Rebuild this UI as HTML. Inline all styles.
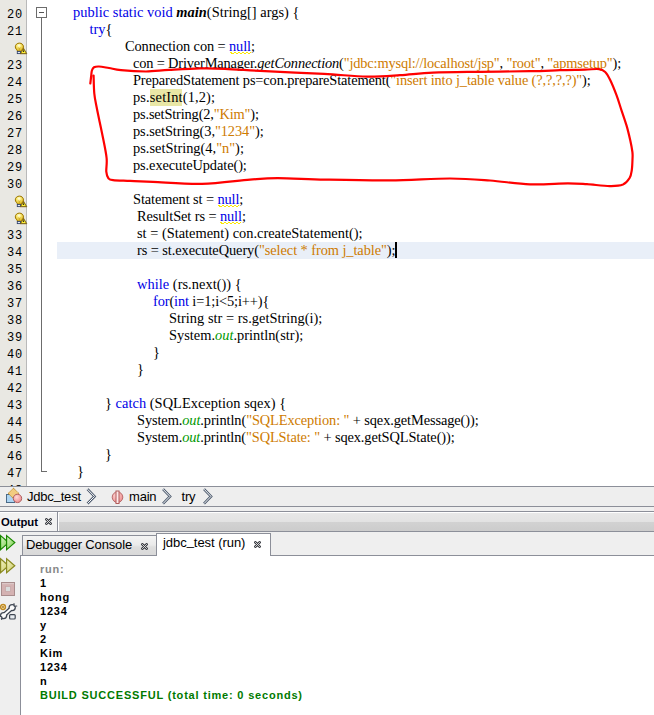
<!DOCTYPE html>
<html><head><meta charset="utf-8">
<style>
*{margin:0;padding:0;box-sizing:border-box}
html,body{width:654px;height:715px;overflow:hidden;background:#fff;position:relative}
#gutter{position:absolute;left:0;top:0;width:26px;height:486px;background:#e9e8e3}
#gline{position:absolute;left:26px;top:0;width:1px;height:486px;background:#b9b9b9}
.ln{position:absolute;left:0;width:23px;padding-top:2.5px;text-align:right;font-family:"Liberation Mono",monospace;font-size:12px;letter-spacing:0.8px;line-height:17px;height:17px;color:#000}
.cl{position:absolute;white-space:pre;font-family:"Liberation Serif",serif;font-size:14.4px;line-height:17px;height:17px;color:#000}
.k{color:#0000e6}
.s{color:#ce7b00}
.o{color:#009900;font-style:italic}
.wv{position:absolute;height:1px;background:repeating-linear-gradient(90deg,#fce800 0 2px,transparent 2px 4px)}
.hl{}
#cur{position:absolute;left:57px;top:242px;width:597px;height:17px;background:#e9eff8}
.fold{position:absolute;background:#6c6c6c}
.bulb{position:absolute;left:14px;width:14px;height:14px}
.wavy{position:absolute;height:3px}
.bc{position:absolute;top:488px;font-family:"Liberation Sans",sans-serif;font-size:13px;letter-spacing:-0.2px;line-height:18px;color:#000;white-space:pre}
#outT{position:absolute;left:1px;top:515px;font-family:"Liberation Sans",sans-serif;font-weight:bold;font-size:11.3px;line-height:14px;color:#000011}
.tabt{position:absolute;font-family:"Liberation Sans",sans-serif;font-size:13px;letter-spacing:-0.15px;line-height:16px;color:#000;white-space:pre}
.con{position:absolute;left:40px;font-family:"Liberation Sans",sans-serif;font-weight:bold;font-size:11px;line-height:14px;letter-spacing:0.8px;color:#000;white-space:pre}
</style></head><body>
<div id="gutter"></div>
<div id="gline"></div>
<div id="cur"></div>

<div style="position:absolute;left:150px;top:89px;width:32px;height:17px;background:#e9e7a6"></div>
<div class="wv" style="left:230px;top:52px;width:21px"></div>
<div class="wv" style="left:230px;top:53px;width:21px;background-position:2px 0"></div>
<div class="wv" style="left:218px;top:205px;width:21px"></div>
<div class="wv" style="left:218px;top:206px;width:21px;background-position:2px 0"></div>
<div class="wv" style="left:220px;top:222px;width:21px"></div>
<div class="wv" style="left:220px;top:223px;width:21px;background-position:2px 0"></div>
<!-- line numbers -->
<div class="ln" style="top:4px">20</div>
<div class="ln" style="top:21px">21</div>
<div class="ln" style="top:55px">23</div>
<div class="ln" style="top:72px">24</div>
<div class="ln" style="top:89px">25</div>
<div class="ln" style="top:106px">26</div>
<div class="ln" style="top:123px">27</div>
<div class="ln" style="top:140px">28</div>
<div class="ln" style="top:157px">29</div>
<div class="ln" style="top:174px">30</div>
<div class="ln" style="top:225px">33</div>
<div class="ln" style="top:242px">34</div>
<div class="ln" style="top:259px">35</div>
<div class="ln" style="top:276px">36</div>
<div class="ln" style="top:293px">37</div>
<div class="ln" style="top:310px">38</div>
<div class="ln" style="top:327px">39</div>
<div class="ln" style="top:344px">40</div>
<div class="ln" style="top:361px">41</div>
<div class="ln" style="top:378px">42</div>
<div class="ln" style="top:395px">43</div>
<div class="ln" style="top:412px">44</div>
<div class="ln" style="top:429px">45</div>
<div class="ln" style="top:446px">46</div>
<div class="ln" style="top:463px">47</div>
<div class="ln" style="top:480px">48</div>

<!-- code -->
<div class="cl" style="left:73px;top:4px;letter-spacing:0.03px"><span class="k">public static void</span> <b><i>main</i></b>(String[] args) {</div>
<div class="cl" style="left:89.5px;top:21px"><span class="k">try</span>{</div>
<div class="cl" style="left:125px;top:38px;letter-spacing:-0.12px">Connection con = <span class="k nul">null</span>;</div>
<div class="cl" style="left:133px;top:55px;letter-spacing:-0.165px">con = DriverManager.<i>getConnection</i>(<span class="s">"jdbc:mysql://localhost/jsp"</span>, <span class="s">"root"</span>, <span class="s">"apmsetup"</span>);</div>
<div class="cl" style="left:133px;top:72px;letter-spacing:-0.136px">PreparedStatement ps=con.prepareStatement(<span class="s">"insert into j_table value (?,?,?,?)"</span>);</div>
<div class="cl" style="left:133px;top:89px;letter-spacing:0.15px">ps.<span class="hl">setInt</span>(1,2);</div>
<div class="cl" style="left:133px;top:106px;letter-spacing:-0.16px">ps.setString(2,<span class="s">"Kim"</span>);</div>
<div class="cl" style="left:133px;top:123px;letter-spacing:-0.08px">ps.setString(3,<span class="s">"1234"</span>);</div>
<div class="cl" style="left:133px;top:140px">ps.setString(4,<span class="s">"n"</span>);</div>
<div class="cl" style="left:133px;top:157px;letter-spacing:-0.09px">ps.executeUpdate();</div>
<div class="cl" style="left:133px;top:191px;letter-spacing:-0.11px">Statement st = <span class="k nul">null</span>;</div>
<div class="cl" style="left:137px;top:208px;letter-spacing:-0.105px">ResultSet rs = <span class="k nul">null</span>;</div>
<div class="cl" style="left:137px;top:225px">st = (Statement) con.createStatement();</div>
<div class="cl" style="left:137px;top:242px;letter-spacing:-0.078px">rs = st.executeQuery(<span class="s">"select * from j_table"</span>);</div>
<div class="cl" style="left:137px;top:276px;letter-spacing:0.04px"><span class="k">while</span> (rs.next()) {</div>
<div class="cl" style="left:153px;top:293px;letter-spacing:-0.13px"><span class="k">for</span>(<span class="k">int</span> i=1;i&lt;5;i++){</div>
<div class="cl" style="left:169px;top:310px;letter-spacing:0.018px">String str = rs.getString(i);</div>
<div class="cl" style="left:169px;top:327px">System.<span class="o">out</span>.println(str);</div>
<div class="cl" style="left:153px;top:344px">}</div>
<div class="cl" style="left:137px;top:361px">}</div>
<div class="cl" style="left:105px;top:395px;letter-spacing:0.036px">} <span class="k">catch</span> (SQLException sqex) {</div>
<div class="cl" style="left:137px;top:412px;letter-spacing:-0.107px">System.<span class="o">out</span>.println(<span class="s">"SQLException: "</span> + sqex.getMessage());</div>
<div class="cl" style="left:137px;top:429px;letter-spacing:-0.113px">System.<span class="o">out</span>.println(<span class="s">"SQLState: "</span> + sqex.getSQLState());</div>
<div class="cl" style="left:105px;top:446px">}</div>
<div class="cl" style="left:77px;top:463px">}</div>


<!-- fold marks -->
<div style="position:absolute;left:36px;top:7px;width:11px;height:11px;border:1px solid #6c6c6c;background:#fff"></div>
<div style="position:absolute;left:39px;top:12px;width:5px;height:1px;background:#555"></div>
<div class="fold" style="left:41px;top:18px;width:1px;height:454px"></div>
<div class="fold" style="left:41px;top:471px;width:6px;height:1px"></div>

<!-- bulbs -->
<svg class="bulb" style="top:42px" width="14" height="14" viewBox="0 0 14 14">
<defs><radialGradient id="bg0" cx="0.45" cy="0.3" r="0.75"><stop offset="0" stop-color="#fffff0"/><stop offset="0.3" stop-color="#faec80"/><stop offset="0.8" stop-color="#e0b820"/><stop offset="1" stop-color="#c89a10"/></radialGradient></defs>
<path d="M3.6 9.4 C3.4 7.9 1.3 7 1.3 4.9 C1.3 2.6 3.2 1.1 5.4 1.1 C7.6 1.1 9.5 2.6 9.5 4.9 C9.5 7 7.4 7.9 7.2 9.4 Z" fill="url(#bg0)" stroke="#9a7400" stroke-width="1"/>
<path d="M4.4 5.5 L5.4 7 L6.4 5.5 M5.4 7 L5.4 9" stroke="#c8a020" stroke-width="0.7" fill="none"/>
<rect x="3.3" y="9.4" width="3.2" height="2.2" fill="#e0e8f4" stroke="#34446a" stroke-width="0.9"/>
<path d="M9.6 6.2 L12.9 11.8 L6.3 11.8 Z" fill="#7a5e00" stroke="#7a5e00" stroke-width="0.6" stroke-linejoin="round"/><path d="M9.6 7.6 L11.8 11 L7.4 11 Z" fill="#fff23a"/>
<rect x="9.1" y="8.2" width="1" height="1.8" rx="0.5" fill="#101010"/>
</svg>
<svg class="bulb" style="top:195px" width="14" height="14" viewBox="0 0 14 14">
<defs><radialGradient id="bg1" cx="0.45" cy="0.3" r="0.75"><stop offset="0" stop-color="#fffff0"/><stop offset="0.3" stop-color="#faec80"/><stop offset="0.8" stop-color="#e0b820"/><stop offset="1" stop-color="#c89a10"/></radialGradient></defs>
<path d="M3.6 9.4 C3.4 7.9 1.3 7 1.3 4.9 C1.3 2.6 3.2 1.1 5.4 1.1 C7.6 1.1 9.5 2.6 9.5 4.9 C9.5 7 7.4 7.9 7.2 9.4 Z" fill="url(#bg1)" stroke="#9a7400" stroke-width="1"/>
<path d="M4.4 5.5 L5.4 7 L6.4 5.5 M5.4 7 L5.4 9" stroke="#c8a020" stroke-width="0.7" fill="none"/>
<rect x="3.3" y="9.4" width="3.2" height="2.2" fill="#e0e8f4" stroke="#34446a" stroke-width="0.9"/>
<path d="M9.6 6.2 L12.9 11.8 L6.3 11.8 Z" fill="#7a5e00" stroke="#7a5e00" stroke-width="0.6" stroke-linejoin="round"/><path d="M9.6 7.6 L11.8 11 L7.4 11 Z" fill="#fff23a"/>
<rect x="9.1" y="8.2" width="1" height="1.8" rx="0.5" fill="#101010"/>
</svg>
<svg class="bulb" style="top:212px" width="14" height="14" viewBox="0 0 14 14">
<defs><radialGradient id="bg2" cx="0.45" cy="0.3" r="0.75"><stop offset="0" stop-color="#fffff0"/><stop offset="0.3" stop-color="#faec80"/><stop offset="0.8" stop-color="#e0b820"/><stop offset="1" stop-color="#c89a10"/></radialGradient></defs>
<path d="M3.6 9.4 C3.4 7.9 1.3 7 1.3 4.9 C1.3 2.6 3.2 1.1 5.4 1.1 C7.6 1.1 9.5 2.6 9.5 4.9 C9.5 7 7.4 7.9 7.2 9.4 Z" fill="url(#bg2)" stroke="#9a7400" stroke-width="1"/>
<path d="M4.4 5.5 L5.4 7 L6.4 5.5 M5.4 7 L5.4 9" stroke="#c8a020" stroke-width="0.7" fill="none"/>
<rect x="3.3" y="9.4" width="3.2" height="2.2" fill="#e0e8f4" stroke="#34446a" stroke-width="0.9"/>
<path d="M9.6 6.2 L12.9 11.8 L6.3 11.8 Z" fill="#7a5e00" stroke="#7a5e00" stroke-width="0.6" stroke-linejoin="round"/><path d="M9.6 7.6 L11.8 11 L7.4 11 Z" fill="#fff23a"/>
<rect x="9.1" y="8.2" width="1" height="1.8" rx="0.5" fill="#101010"/>
</svg>


<!-- cursor -->
<div style="position:absolute;left:395px;top:242px;width:2px;height:16px;background:#000"></div>

<!-- red annotation -->
<svg style="position:absolute;left:0;top:0" width="654" height="486" viewBox="0 0 654 486">
<path d="M90.3 83.5 C90.5 82.2 90.9 78.2 91.2 76.0 C91.5 73.8 91.4 72.0 91.9 70.5 C92.4 69.0 92.8 68.0 94.0 67.3 C95.2 66.6 96.5 66.4 99.0 66.5 C101.5 66.6 105.3 67.4 109.0 68.0 C112.7 68.6 114.8 69.6 121.0 70.2 C127.2 70.8 138.0 71.5 146.0 71.5 C154.0 71.5 160.0 70.4 169.0 69.9 C178.0 69.4 190.7 68.6 200.0 68.4 C209.3 68.2 214.2 68.3 225.0 68.8 C235.8 69.3 248.5 70.3 265.0 71.2 C281.5 72.1 307.0 73.0 324.0 73.9 C341.0 74.8 354.3 76.4 367.0 76.6 C379.7 76.8 389.0 75.9 400.0 75.2 C411.0 74.5 419.7 73.2 433.0 72.6 C446.3 72.0 463.8 72.0 480.0 71.8 C496.2 71.6 516.7 71.5 530.0 71.2 C543.3 70.9 550.8 70.5 560.0 70.2 C569.2 69.9 578.5 69.8 585.0 69.6 C591.5 69.4 595.6 68.7 599.0 69.1 C602.4 69.5 603.3 70.2 605.2 72.0 C607.1 73.8 608.3 76.2 610.2 80.1 C612.1 84.0 614.6 90.2 616.5 95.2 C618.4 100.2 619.8 105.3 621.5 110.3 C623.2 115.3 625.0 120.4 626.5 125.4 C628.0 130.4 629.3 136.1 630.3 140.5 C631.3 144.9 632.0 148.9 632.4 152.0 C632.8 155.1 632.6 156.0 632.5 159.0 C632.4 162.0 632.3 166.8 631.8 170.0 C631.3 173.2 631.1 175.6 629.6 178.0 C628.1 180.4 626.3 183.2 623.0 184.6 C619.7 185.9 615.7 186.2 609.7 186.1 C603.7 186.0 594.0 184.7 587.0 184.2 C580.0 183.7 577.5 183.3 568.0 183.3 C558.5 183.3 543.0 184.8 530.0 184.3 C517.0 183.8 503.3 181.5 490.0 180.5 C476.7 179.5 466.7 178.5 450.0 178.5 C433.3 178.5 410.8 180.2 390.0 180.4 C369.2 180.6 343.7 180.0 325.0 179.6 C306.3 179.2 290.3 178.1 277.8 178.1 C265.3 178.1 262.6 178.6 250.0 179.6 C237.4 180.6 218.2 183.5 202.0 183.9 C185.8 184.3 164.8 182.3 152.8 181.8 C140.8 181.3 136.6 181.2 130.0 180.9 C123.4 180.6 116.7 180.5 113.1 180.1 C109.5 179.7 109.5 179.7 108.4 178.3 C107.3 176.9 106.6 175.1 106.3 171.7 C106.0 168.3 107.2 163.9 106.6 158.0 C106.0 152.1 103.9 142.6 102.6 136.0 C101.3 129.4 100.0 123.5 99.0 118.7 C98.0 113.9 97.4 111.2 96.6 107.0 C95.8 102.8 94.8 98.8 94.3 93.5 C93.8 88.2 93.7 78.5 93.6 75.5" fill="none" stroke="#f00" stroke-width="2.2" stroke-linecap="round" stroke-linejoin="round"/>
</svg>

<!-- breadcrumb bar -->
<div style="position:absolute;left:0;top:486px;width:654px;height:1px;background:#8c8f99"></div>
<div style="position:absolute;left:0;top:487px;width:654px;height:19px;background:#eeeeee"></div>
<div style="position:absolute;left:0;top:506px;width:654px;height:1px;background:#8c8f99"></div>
<div style="position:absolute;left:0;top:507px;width:654px;height:4px;background:#efefef"></div>
<div class="bc" style="left:27px">Jdbc<span style="position:relative;top:-2px">_</span>test</div>
<div class="bc" style="left:129px">main</div>
<div class="bc" style="left:181.5px">try</div>
<svg style="position:absolute;left:0;top:486px" width="654" height="20">
<g fill="none" stroke-linejoin="miter"><path d="M87.5 3.2 L94.5 10.4 L87.5 17.6" stroke="#48566a" stroke-width="2.6"/><path d="M87.5 3.2 L94.5 10.4 L87.5 17.6" stroke="#ffffff" stroke-width="1"/><path d="M163 3.2 L170 10.4 L163 17.6" stroke="#48566a" stroke-width="2.6"/><path d="M163 3.2 L170 10.4 L163 17.6" stroke="#ffffff" stroke-width="1"/><path d="M204 3.2 L211 10.4 L204 17.6" stroke="#48566a" stroke-width="2.6"/><path d="M204 3.2 L211 10.4 L204 17.6" stroke="#ffffff" stroke-width="1"/></g>
<!-- class icon -->
<defs><radialGradient id="pk" cx="0.4" cy="0.35" r="0.7"><stop offset="0" stop-color="#ffd8d8"/><stop offset="1" stop-color="#ec8a8a"/></radialGradient></defs>
<rect x="6.5" y="8.5" width="8" height="8" fill="#acd4f2" stroke="#4a6a88" stroke-width="1"/>
<path d="M13.5 2.2 L18.8 7.4 L13.5 12.6 L8.2 7.4 Z" fill="#f2cc80" stroke="#b87800" stroke-width="1" stroke-dasharray="1 0.6"/>
<circle cx="17.5" cy="12.4" r="4.2" fill="url(#pk)" stroke="#b06060" stroke-width="1"/>
<!-- method icon -->
<circle cx="117.5" cy="11.2" r="5.3" fill="url(#pk)" stroke="#b86a6a" stroke-width="1"/>
<rect x="116" y="5" width="3" height="12.5" fill="#ffe8e8" stroke="#b05a5a" stroke-width="1"/>
</svg>

<!-- output window -->
<div style="position:absolute;left:0;top:511px;width:654px;height:1px;background:#8c8f99"></div>
<div style="position:absolute;left:58px;top:512px;width:596px;height:1px;background:#fff"></div>
<div style="position:absolute;left:59px;top:513px;width:595px;height:9px;background:linear-gradient(#e8e8e8,#e2e2e2)"></div>
<div style="position:absolute;left:59px;top:522px;width:595px;height:9px;background:linear-gradient(#d2d2d2,#cccccc)"></div>
<div style="position:absolute;left:0;top:512px;width:57px;height:19px;background:#f2f2f2;border-top:1px solid #fff"></div>
<div style="position:absolute;left:57px;top:511px;width:1px;height:20px;background:#8c8f99"></div>
<div style="position:absolute;left:0;top:531px;width:654px;height:1px;background:#8c8f99"></div>
<div style="position:absolute;left:0;top:532px;width:654px;height:183px;background:#efefef"></div>
<div id="outT">Output</div>
<svg style="position:absolute;left:45px;top:518px" width="7" height="7" viewBox="0 0 7 7"><g fill="none" stroke-linecap="round"><path d="M1.4 1.4 L5.6 5.6 M5.6 1.4 L1.4 5.6" stroke="#3a3c42" stroke-width="2.7"/><path d="M1.4 1.4 L5.6 5.6 M5.6 1.4 L1.4 5.6" stroke="#e8e8e8" stroke-width="0.9"/></g></svg>

<!-- console tabs -->
<div style="position:absolute;left:22px;top:535px;width:135px;height:21px;border:1px solid #8c8f99;border-bottom:none;background:linear-gradient(#f4f4f4 0%,#eaeaea 45%,#dedede 55%,#d8d8d8 100%)"></div>
<div class="tabt" style="left:26px;top:537px">Debugger Console</div>
<svg style="position:absolute;left:141px;top:543px" width="7" height="7" viewBox="0 0 7 7"><g fill="none" stroke-linecap="round"><path d="M1.4 1.4 L5.6 5.6 M5.6 1.4 L1.4 5.6" stroke="#3a3c42" stroke-width="2.7"/><path d="M1.4 1.4 L5.6 5.6 M5.6 1.4 L1.4 5.6" stroke="#e8e8e8" stroke-width="0.9"/></g></svg>
<div style="position:absolute;left:20px;top:555px;width:634px;height:160px;background:#fff;border-left:1px solid #8c8f99;border-top:1px solid #8c8f99"></div>
<div style="position:absolute;left:156px;top:533px;width:115px;height:23px;border:1px solid #8c8f99;border-bottom:none;background:#fff"></div>
<div class="tabt" style="left:163px;top:535px;letter-spacing:-0.05px">jdbc<span style="position:relative;top:-2px">_</span>test (run)</div>
<svg style="position:absolute;left:254px;top:541px" width="7" height="7" viewBox="0 0 7 7"><g fill="none" stroke-linecap="round"><path d="M1.4 1.4 L5.6 5.6 M5.6 1.4 L1.4 5.6" stroke="#3a3c42" stroke-width="2.7"/><path d="M1.4 1.4 L5.6 5.6 M5.6 1.4 L1.4 5.6" stroke="#e8e8e8" stroke-width="0.9"/></g></svg>

<!-- toolbar icons -->
<svg style="position:absolute;left:0;top:534px" width="20" height="90">
<defs><linearGradient id="gg" x1="0" y1="0" x2="1" y2="1"><stop offset="0" stop-color="#e0fad0"/><stop offset="1" stop-color="#70c840"/></linearGradient>
<linearGradient id="og" x1="0" y1="0" x2="1" y2="1"><stop offset="0" stop-color="#f4f4c8"/><stop offset="1" stop-color="#c8c860"/></linearGradient></defs>
<path d="M0.6 1.6 L8.6 8.6 L0.6 15.6 Z" fill="url(#gg)" stroke="#1a8800" stroke-width="1.2" stroke-linejoin="miter"/>
<path d="M6.6 1.6 L14.8 8.6 L6.6 15.6 Z" fill="url(#gg)" stroke="#1a8800" stroke-width="1.2" stroke-linejoin="miter"/>
<path d="M0.6 24.8 L8.6 31.8 L0.6 38.8 Z" fill="url(#og)" stroke="#8a8a20" stroke-width="1.2" stroke-linejoin="miter"/>
<path d="M6.6 24.8 L14.8 31.8 L6.6 38.8 Z" fill="url(#og)" stroke="#8a8a20" stroke-width="1.2" stroke-linejoin="miter"/>
<rect x="1.5" y="48.5" width="13" height="13" fill="#d4b2b2" stroke="#a88c8c" stroke-width="1"/>
<rect x="2" y="49" width="12" height="1.2" fill="#dcc8c8"/>
<rect x="5.5" y="52.5" width="5" height="5" fill="#dadcdc" stroke="#c8a8a8" stroke-width="0.8"/>
<g stroke-linecap="round" stroke-linejoin="round">
<path d="M3.8 81.2 L11.8 74" stroke="#3e4652" stroke-width="4.6" fill="none"/>
<circle cx="12.2" cy="73.6" r="3.7" fill="#3e4652"/>
<circle cx="3.6" cy="81.6" r="3.7" fill="#3e4652"/>
<path d="M3.8 81.2 L11.8 74" stroke="#fbfbfb" stroke-width="2.2" fill="none"/>
<circle cx="12.2" cy="73.6" r="2.4" fill="#fbfbfb"/>
<circle cx="3.6" cy="81.6" r="2.4" fill="#fbfbfb"/>
<path d="M14 69.5 L14.2 72.2 L16.8 72" stroke="#3e4652" stroke-width="1.1" fill="#efefef"/>
<path d="M-0.5 82.5 L1.8 82.8 L1.6 85.5" stroke="#3e4652" stroke-width="1.1" fill="#efefef"/>
</g>
<rect x="9.6" y="80.6" width="5.6" height="4.4" rx="1" fill="#e8ecf0" stroke="#3e4652" stroke-width="1.2"/>
<circle cx="3" cy="73" r="2.4" fill="#fff4d0" stroke="#c08a20" stroke-width="1.5"/>
<circle cx="3" cy="73" r="0.9" fill="#a06a10"/>
</svg>

<!-- console text -->
<div class="con" style="top:562px;color:#888">run:</div>
<div class="con" style="top:576px">1</div>
<div class="con" style="top:590px">hong</div>
<div class="con" style="top:604px">1234</div>
<div class="con" style="top:618px">y</div>
<div class="con" style="top:632px">2</div>
<div class="con" style="top:646px">Kim</div>
<div class="con" style="top:660px">1234</div>
<div class="con" style="top:674px">n</div>
<div class="con" style="top:688px;color:#007a00">BUILD SUCCESSFUL (total time: 0 seconds)</div>
</body></html>
